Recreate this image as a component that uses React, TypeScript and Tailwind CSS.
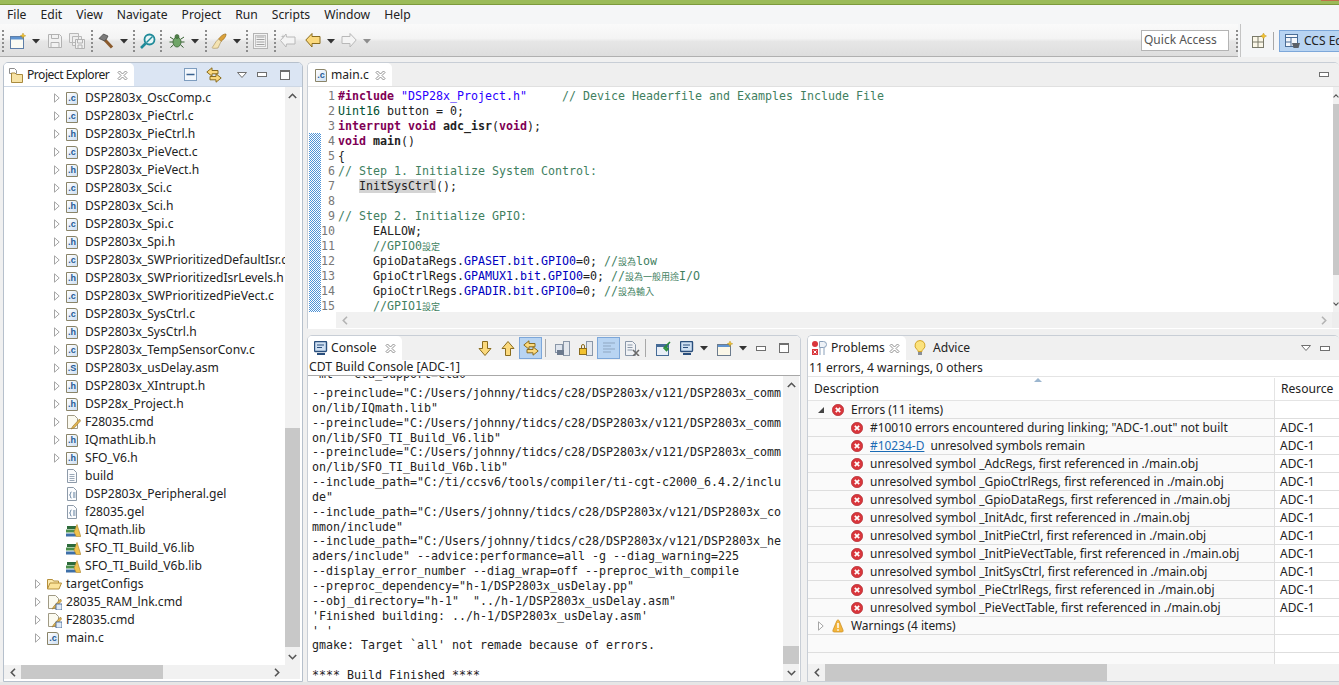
import type { ReactNode } from "react";

const MONO = "font-['DejaVu_Sans_Mono','Liberation_Mono',monospace] text-[11.63px]";

function Caret({ className = "" }: { className?: string }) {
  return (
    <svg width="8" height="5" viewBox="0 0 8 5" className={"shrink-0 " + className}>
      <path d="M0 0h8L4 4.500z" fill="#333" />
    </svg>
  );
}

function Grip({ className = "" }: { className?: string }) {
  return (
    <div className={"flex w-[2px] shrink-0 flex-col gap-[2px] " + className}>
      {[0, 1, 2, 3, 4, 5].map((i) => (
        <div key={i} className="h-[2px] w-[2px] bg-[#8c8c8c]" />
      ))}
    </div>
  );
}

function CloseX({ className = "" }: { className?: string }) {
  return (
    <svg width="11" height="11" viewBox="0 0 11 11" className={"shrink-0 " + className}>
      <path d="M1 2.500 2.500 1 5.500 4 8.500 1 10 2.500 7 5.500 10 8.500 8.500 10 5.500 7 2.500 10 1 8.500 4 5.500z" fill="#fff" stroke="#8e8e8e" />
    </svg>
  );
}

function MinBtn() {
  return <div className="h-[5px] w-[10px] shrink-0 border border-[#6f6f6f] bg-white" />;
}

function MaxBtn() {
  return <div className="h-[10px] w-[10px] shrink-0 border border-[#6f6f6f] border-t-2 bg-white" />;
}

function ViewMenu() {
  return (
    <svg width="10" height="6" viewBox="0 0 10 6" className="shrink-0">
      <path d="M.5.500h9L5 5.500z" fill="#fff" stroke="#6f6f6f" />
    </svg>
  );
}

function ErrorIcon({ className = "" }: { className?: string }) {
  return (
    <svg width="12" height="12" viewBox="0 0 12 12" className={"shrink-0 " + className}>
      <circle cx="6" cy="6" r="5.700" fill="#d9363c" stroke="#a91f25" strokeWidth=".6" />
      <path d="M3.800 3.800l4.400 4.400M8.200 3.800 3.800 8.200" stroke="#fff" strokeWidth="1.700" />
    </svg>
  );
}

function WarnIcon() {
  return (
    <svg width="12" height="14" viewBox="0 0 12 14" className="shrink-0">
      <path d="M6 1c1 0 1.300.8 1.700 2L11 11c.4 1.200 0 2-1 2H2c-1 0-1.400-.8-1-2L4.300 3C4.700 1.800 5 1 6 1z" fill="#f3b63e" stroke="#c98a1b" strokeWidth=".7" />
      <path d="M6 4v5M6 10.300v1.400" stroke="#fff" strokeWidth="1.500" />
    </svg>
  );
}

function TreeArrow({ open = false, className = "" }: { open?: boolean; className?: string }) {
  return open ? (
    <svg width="8" height="8" viewBox="0 0 8 8" className={"shrink-0 " + className}>
      <path d="M7 1v6H1z" fill="#444" />
    </svg>
  ) : (
    <svg width="6" height="10" viewBox="0 0 6 10" className={"shrink-0 " + className}>
      <path d="M.5.800 5.200 5 .5 9.200z" fill="#fff" stroke="#a5a5a5" />
    </svg>
  );
}

function FileIcon({ letter }: { letter: string }) {
  return (
    <div className="flex h-[13px] w-[12px] shrink-0 items-center justify-center rounded-tr-[3px] border border-[#8a8468] bg-[linear-gradient(135deg,#fff,#cfdff2)] font-['Liberation_Sans',sans-serif] text-[9px] leading-none font-bold text-[#1f5a96]">
      {letter}
    </div>
  );
}

function PageLines({ children }: { children?: ReactNode }) {
  return (
    <svg width="12" height="14" viewBox="0 0 12 14" className="shrink-0">
      <path d="M1.500.500h6l3 3v10h-9z" fill="#fbfcfe" stroke="#8d9aa9" />
      {children ?? <path d="M3.500 5.500h5M3.500 7.500h5M3.500 9.500h5M3.500 11.500h5" stroke="#9aa8b8" />}
    </svg>
  );
}

function CmdIcon({ linked = false }: { linked?: boolean }) {
  return (
    <svg width="15" height="15" viewBox="0 0 15 15" className="shrink-0">
      <path d="M1.500.500h7l3 3v10h-10z" fill="#fbfaf0" stroke="#a09a85" />
      <path d="M13.500 4 7 11l-2 3 3.500-1.500L14.500 6z" fill="#e2b652" stroke="#98762a" strokeWidth=".6" />
      {linked && <rect x="9" y="9" width="6" height="6" fill="#dfe9f5" stroke="#34578a" strokeWidth=".8" />}
    </svg>
  );
}

function LibIcon() {
  return (
    <svg width="15" height="13" viewBox="0 0 15 13" className="shrink-0">
      <rect x="0" y="9.500" width="10" height="3" fill="#3d6fa8" />
      <rect x="0" y="5.500" width="10" height="3" fill="#4b8f4b" />
      <rect x="1" y="2" width="9" height="3" fill="#2d6a3a" />
      <path d="M11 .500 14.800 12.500h-4.600L8 8z" fill="#f0c24e" stroke="#a9822a" strokeWidth=".6" />
    </svg>
  );
}

function FolderIcon() {
  return (
    <svg width="15" height="12" viewBox="0 0 15 12" className="shrink-0">
      <path d="M.500 11V1.500h5l1 1.500h5V5" fill="#fbe9ad" stroke="#b58f3a" />
      <path d="M.500 11 3 5h11.500L12 11z" fill="#fbe39a" stroke="#b58f3a" />
    </svg>
  );
}

const B = "#8a6c1e";

function ToolbarIcon({ name }: { name: string }) {
  const common = { width: 16, height: 16, viewBox: "0 0 16 16", className: "shrink-0" };
  switch (name) {
    case "new":
      return (
        <svg {...common}>
          <rect x=".5" y="3.500" width="13" height="12" fill="#fbfbf3" stroke="#5e7fa8" />
          <rect x="1" y="4" width="12" height="2.500" fill="#5f93d0" />
          <path d="M13 0l.8 2 2 .8-2 .8-.8 2-.8-2-2-.8 2-.8z" fill="#f2c230" stroke="#b48a16" strokeWidth=".4" />
        </svg>
      );
    case "save":
      return (
        <svg {...common}>
          <path d="M1.500 1.500h11l2 2v11h-13z" fill="#f2f2f2" stroke="#b2b2b2" />
          <path d="M4.500 1.500v4h7v-4M4 14.500v-5h8v5" fill="none" stroke="#b2b2b2" />
        </svg>
      );
    case "saveall":
      return (
        <svg {...common}>
          <path d="M.5.500h9v9h-9zM3.500 3.500h9v9h-9z" fill="#efefef" stroke="#b8b8b8" />
          <path d="M6.500 6.500h9v9h-9z" fill="#efefef" stroke="#b2b2b2" />
          <path d="M8.500 7v3h5V7M9 15v-3h4v3" fill="none" stroke="#b2b2b2" />
        </svg>
      );
    case "hammer":
      return (
        <svg {...common}>
          <path d="M6.500 6.500 14 14.500" stroke="#8a5a2c" strokeWidth="3.200" />
          <path d="M1 5.500 5.500 1 10 3 8.500 6 6.500 8z" fill="#7b7b7b" stroke="#3e3e3e" strokeWidth=".7" />
        </svg>
      );
    case "search":
      return (
        <svg {...common}>
          <circle cx="9.500" cy="6.500" r="5" fill="#e8f6f7" stroke="#1f8a99" strokeWidth="1.800" />
          <path d="M6.500 9.500l6-6" stroke="#1f8a99" strokeWidth="1.500" />
          <path d="M5.500 10.500 1 15" stroke="#1f8a99" strokeWidth="2.600" />
        </svg>
      );
    case "bug":
      return (
        <svg {...common}>
          <ellipse cx="8" cy="9" rx="4" ry="5" fill="#6fa567" stroke="#35602f" strokeWidth=".8" />
          <circle cx="8" cy="3.500" r="2" fill="#4f7e49" stroke="#35602f" strokeWidth=".6" />
          <path d="M4 6 1 4M4 9H.5M4.300 12 1.500 14.500M12 6l3-2M12 9h3.500M11.700 12l2.800 2.500" stroke="#35602f" />
        </svg>
      );
    case "brush":
      return (
        <svg {...common}>
          <path d="M15 1c.5 2.500-3 6-5 7.500L7.500 6C9 4 12.500.500 15 1z" fill="#dca23a" stroke="#906517" strokeWidth=".6" />
          <path d="M7.500 6 10 8.500l-3 6.500c-3 .5-5.500.5-6-.5C3 13 3.500 9.500 7.500 6z" fill="#f4e3b2" stroke="#a48d58" strokeWidth=".6" />
        </svg>
      );
    case "page":
      return (
        <svg {...common}>
          <rect x=".5" y=".5" width="14" height="15" fill="#f3f3f3" stroke="#b4b4b4" />
          <path d="M3.500 4h8M3.500 6.500h8M3.500 9h8M3.500 11.500h8" stroke="#a0a0a0" />
          <rect x="2.500" y="2.500" width="10" height="11" fill="none" stroke="#c4c4c4" />
        </svg>
      );
    case "lastedit":
      return (
        <svg {...common}>
          <path d="M6.500 4H15v7H6.500L6 14 .5 7.500 6 1z" fill="#f4f4f4" stroke="#b8b8b8" />
          <path d="M3 1l.5 2 2 .5-2 .5L3 6l-.5-2-2-.5 2-.5z" fill="#bcbcbc" />
        </svg>
      );
    case "left":
      return (
        <svg {...common}>
          <path d="M7 3.500h8v7H7v3.500L.8 7 7 .5z" fill="#fbd97d" stroke={B} />
        </svg>
      );
    default:
      return (
        <svg {...common}>
          <path d="M9 3.500H1v7h8v3.500L15.200 7 9 .5z" fill="#f4f4f4" stroke="#b8b8b8" />
        </svg>
      );
  }
}

function LinkIcon() {
  return (
    <svg width="16" height="16" viewBox="0 0 16 16" className="shrink-0">
      <path d="M6 .800.800 5 6 9.200V6.800h6V3.500H6z" fill="#fbd97d" stroke={B} />
      <path d="M10 6.800 15.200 11 10 15.200v-2.400H4V9.500h6z" fill="#fbd97d" stroke={B} />
    </svg>
  );
}

function HeaderTab({ icon, label, width, labelClass = "ml-[4px]" }: { icon: ReactNode; label: string; width: string; labelClass?: string }) {
  return (
    <div className={"flex h-full shrink-0 items-center rounded-tr-[5px] bg-white " + width}>
      {icon}
      <span className={"whitespace-nowrap " + labelClass}>{label}</span>
      <CloseX className="ml-auto mr-[6px]" />
    </div>
  );
}

function VScroll({ thumb, className = "" }: { thumb: string; className?: string }) {
  return (
    <div className={"flex shrink-0 flex-col items-center bg-[#f1f1f1] " + className}>
      <span className="flex h-[17px] w-full items-center justify-center">
        <svg width="9" height="6" viewBox="0 0 9 6">
          <path d="M.8 5 4.500 1.300 8.200 5" fill="none" stroke="#555" strokeWidth="1.600" />
        </svg>
      </span>
      <div className="relative w-full flex-1">
        <div className={"absolute inset-x-0 bg-[#c8c8c8] " + thumb} />
      </div>
      <span className="flex h-[17px] w-full items-center justify-center">
        <svg width="9" height="6" viewBox="0 0 9 6">
          <path d="M.8 1 4.500 4.700 8.200 1" fill="none" stroke="#555" strokeWidth="1.600" />
        </svg>
      </span>
    </div>
  );
}

function HScroll({ thumb, className = "", arrow = "#555", right = true }: { thumb?: string; className?: string; arrow?: string; right?: boolean }) {
  return (
    <div className={"flex shrink-0 items-center bg-[#f1f1f1] " + className}>
      <span className="flex h-full w-[17px] items-center justify-center">
        <svg width="6" height="9" viewBox="0 0 6 9">
          <path d="M5 .8 1.300 4.500 5 8.200" fill="none" stroke={arrow} strokeWidth="1.600" />
        </svg>
      </span>
      <div className="relative h-full flex-1">
        {thumb && <div className={"absolute inset-y-0 bg-[#c8c8c8] " + thumb} />}
      </div>
      {right && (
        <span className="flex h-full w-[17px] items-center justify-center">
          <svg width="6" height="9" viewBox="0 0 6 9">
            <path d="M1 .8 4.700 4.500 1 8.200" fill="none" stroke={arrow} strokeWidth="1.600" />
          </svg>
        </span>
      )}
    </div>
  );
}

type TreeRow = { name: string; icon: ReactNode; arrow?: boolean; top?: boolean };
const C = <FileIcon letter=".c" />;
const H = <FileIcon letter=".h" />;
const S = <FileIcon letter=".S" />;
const GEL = (
  <PageLines>
    <path d="M5.500 5c-1 0-1 .7-1 1.500S4 8 3.500 8c.5 0 1 .5 1 1.500S4.500 11 5.500 11" fill="none" stroke="#5d7c9b" />
    <path d="M7 6h2.500M7 8h2.500M7 10h2.500" stroke="#5d7c9b" />
  </PageLines>
);

const TREE: TreeRow[] = [
  { name: "DSP2803x_OscComp.c", icon: C, arrow: true },
  { name: "DSP2803x_PieCtrl.c", icon: C, arrow: true },
  { name: "DSP2803x_PieCtrl.h", icon: H, arrow: true },
  { name: "DSP2803x_PieVect.c", icon: C, arrow: true },
  { name: "DSP2803x_PieVect.h", icon: H, arrow: true },
  { name: "DSP2803x_Sci.c", icon: C, arrow: true },
  { name: "DSP2803x_Sci.h", icon: H, arrow: true },
  { name: "DSP2803x_Spi.c", icon: C, arrow: true },
  { name: "DSP2803x_Spi.h", icon: H, arrow: true },
  { name: "DSP2803x_SWPrioritizedDefaultIsr.c", icon: C, arrow: true },
  { name: "DSP2803x_SWPrioritizedIsrLevels.h", icon: H, arrow: true },
  { name: "DSP2803x_SWPrioritizedPieVect.c", icon: C, arrow: true },
  { name: "DSP2803x_SysCtrl.c", icon: C, arrow: true },
  { name: "DSP2803x_SysCtrl.h", icon: H, arrow: true },
  { name: "DSP2803x_TempSensorConv.c", icon: C, arrow: true },
  { name: "DSP2803x_usDelay.asm", icon: S, arrow: true },
  { name: "DSP2803x_XIntrupt.h", icon: H, arrow: true },
  { name: "DSP28x_Project.h", icon: H, arrow: true },
  { name: "F28035.cmd", icon: <CmdIcon />, arrow: true },
  { name: "IQmathLib.h", icon: H, arrow: true },
  { name: "SFO_V6.h", icon: H, arrow: true },
  { name: "build", icon: <PageLines /> },
  { name: "DSP2803x_Peripheral.gel", icon: GEL },
  { name: "f28035.gel", icon: GEL },
  { name: "IQmath.lib", icon: <LibIcon /> },
  { name: "SFO_TI_Build_V6.lib", icon: <LibIcon /> },
  { name: "SFO_TI_Build_V6b.lib", icon: <LibIcon /> },
  { name: "targetConfigs", icon: <FolderIcon />, arrow: true, top: true },
  { name: "28035_RAM_lnk.cmd", icon: <CmdIcon linked />, arrow: true, top: true },
  { name: "F28035.cmd", icon: <CmdIcon linked />, arrow: true, top: true },
  { name: "main.c", icon: C, arrow: true, top: true },
];

type Tok = [string, string?];
const K = "text-[#7f0055] font-bold";
const G = "text-[#3f7f5f]";
const F = "text-[#0000c0]";
const CJK = "text-[#3f7f5f] font-['Noto_Sans_CJK_TC',sans-serif] text-[9px]";

const CODE: Tok[][] = [
  [["#include", K], [" "], ['"DSP28x_Project.h"', "text-[#2a00ff]"], ["     "], ["// Device Headerfile and Examples Include File", G]],
  [["Uint16", "text-[#005032]"], [" button = 0;"]],
  [["interrupt", K], [" "], ["void", K], [" "], ["adc_isr", "font-bold"], ["("], ["void", K], [");"]],
  [["void", K], [" "], ["main", "font-bold"], ["()"]],
  [["{"]],
  [["// Step 1. Initialize System Control:", G]],
  [["   "], ["InitSysCtrl", "bg-[#d4d4d4]"], ["();"]],
  [[" "]],
  [["// Step 2. Initialize GPIO:", G]],
  [["     EALLOW;"]],
  [["     "], ["//GPIO0", G], ["設定", CJK]],
  [["     GpioDataRegs."], ["GPASET", F], ["."], ["bit", F], ["."], ["GPIO0", F], ["=0; "], ["//", G], ["設為", CJK], ["low", G]],
  [["     GpioCtrlRegs."], ["GPAMUX1", F], ["."], ["bit", F], ["."], ["GPIO0", F], ["=0; "], ["//", G], ["設為一般用途", CJK], ["I/O", G]],
  [["     GpioCtrlRegs."], ["GPADIR", F], ["."], ["bit", F], ["."], ["GPIO0", F], ["=0; "], ["//", G], ["設為輸入", CJK]],
  [["     "], ["//GPIO1", G], ["設定", CJK]],
];

const CONSOLE = [
  '--preinclude="C:/Users/johnny/tidcs/c28/DSP2803x/v121/DSP2803x_comm',
  'on/lib/IQmath.lib"',
  '--preinclude="C:/Users/johnny/tidcs/c28/DSP2803x/v121/DSP2803x_comm',
  'on/lib/SFO_TI_Build_V6.lib"',
  '--preinclude="C:/Users/johnny/tidcs/c28/DSP2803x/v121/DSP2803x_comm',
  'on/lib/SFO_TI_Build_V6b.lib"',
  '--include_path="C:/ti/ccsv6/tools/compiler/ti-cgt-c2000_6.4.2/inclu',
  'de"',
  '--include_path="C:/Users/johnny/tidcs/c28/DSP2803x/v121/DSP2803x_co',
  'mmon/include"',
  '--include_path="C:/Users/johnny/tidcs/c28/DSP2803x/v121/DSP2803x_he',
  'aders/include" --advice:performance=all -g --diag_warning=225',
  "--display_error_number --diag_wrap=off --preproc_with_compile",
  '--preproc_dependency="h-1/DSP2803x_usDelay.pp"',
  '--obj_directory="h-1"  "../h-1/DSP2803x_usDelay.asm"',
  "'Finished building: ../h-1/DSP2803x_usDelay.asm'",
  "' '",
  "gmake: Target `all' not remade because of errors.",
  " ",
  "**** Build Finished ****",
];

const ERRORS = [
  "unresolved symbol _AdcRegs, first referenced in ./main.obj",
  "unresolved symbol _GpioCtrlRegs, first referenced in ./main.obj",
  "unresolved symbol _GpioDataRegs, first referenced in ./main.obj",
  "unresolved symbol _InitAdc, first referenced in ./main.obj",
  "unresolved symbol _InitPieCtrl, first referenced in ./main.obj",
  "unresolved symbol _InitPieVectTable, first referenced in ./main.obj",
  "unresolved symbol _InitSysCtrl, first referenced in ./main.obj",
  "unresolved symbol _PieCtrlRegs, first referenced in ./main.obj",
  "unresolved symbol _PieVectTable, first referenced in ./main.obj",
];

function ProblemRow({ children, resource = "" }: { children?: ReactNode; resource?: string }) {
  return (
    <div className="flex h-[18px] border-b border-[#dedede]">
      <div className="flex w-[466px] shrink-0 items-center bg-[#fafafa]">{children}</div>
      <div className="flex-1 border-l border-[#dedede] pl-[5px] leading-[17px]">{resource}</div>
    </div>
  );
}

function ConsoleTool({ children, on = false }: { children: ReactNode; on?: boolean }) {
  return (
    <div className={"flex h-[22px] w-[23px] shrink-0 items-center justify-center " + (on ? "border border-[#7da7d9] bg-[#b8d4f2]" : "")}>
      {children}
    </div>
  );
}

function Sep({ className }: { className: string }) {
  return <div className={"h-[18px] w-px shrink-0 bg-[#a8a8a8] " + className} />;
}

export default function App() {
  return (
    <div className="flex h-[685px] w-[1339px] flex-col overflow-hidden bg-[#f0f0f0] font-['Noto_Sans','Open_Sans',sans-serif] text-[12.1px] text-[#222]">
      {/* title bar strip */}
      <div className="flex h-[5px] shrink-0 justify-end border-b border-[#7c9a3c] bg-[#9bbb59]">
        <div className="h-[1px] w-[18px] bg-[#c0704a]" />
      </div>

      {/* menu */}
      <div className="flex h-[19px] shrink-0 items-center gap-[14px] bg-[#f5f6f7] pt-[2px] pl-[7px] text-[12.15px] leading-none">
        {["File", "Edit", "View", "Navigate", "Project", "Run", "Scripts", "Window", "Help"].map((m) => (
          <span key={m}>{m}</span>
        ))}
      </div>

      {/* toolbar */}
      <div className="flex h-[33px] shrink-0 bg-[#f5f6f7]">
        <div className="flex h-[33px] w-[1238px] shrink-0 items-center border-b border-[#b0b0b0] bg-[linear-gradient(#fafafa_0%,#f4f4f4_45%,#e6e6e6_55%,#dedede_100%)] pt-[2px] pl-[2px]">
          <Grip />
          <div className="ml-[6px]"><ToolbarIcon name="new" /></div>
          <Caret className="ml-[6px]" />
          <div className="ml-[7px]"><ToolbarIcon name="save" /></div>
          <div className="ml-[6px]"><ToolbarIcon name="saveall" /></div>
          <Grip className="ml-[6px]" />
          <div className="ml-[5px]"><ToolbarIcon name="hammer" /></div>
          <Caret className="ml-[6px]" />
          <Grip className="ml-[5px]" />
          <div className="ml-[5px]"><ToolbarIcon name="search" /></div>
          <Grip className="ml-[4px]" />
          <div className="ml-[7px]"><ToolbarIcon name="bug" /></div>
          <Caret className="ml-[6px]" />
          <Grip className="ml-[6px]" />
          <div className="ml-[4px]"><ToolbarIcon name="brush" /></div>
          <Caret className="ml-[6px]" />
          <Grip className="ml-[5px]" />
          <div className="ml-[5px]"><ToolbarIcon name="page" /></div>
          <Grip className="ml-[5px]" />
          <div className="ml-[4px]"><ToolbarIcon name="lastedit" /></div>
          <div className="ml-[9px]"><ToolbarIcon name="left" /></div>
          <Caret className="ml-[6px]" />
          <div className="ml-[6px]"><ToolbarIcon name="right" /></div>
          <Caret className="ml-[6px] opacity-50" />
          <div className="ml-auto -mt-[2px] flex h-[21px] w-[88px] items-center border border-[#b4b4b4] bg-white pl-[2px] text-[12px] text-[#555]">
            Quick Access
          </div>
          <Grip className="ml-[7px]" />
        </div>
        <div className="flex flex-1 items-center">
          <div className="ml-[2px] h-full w-px bg-[#c4c4c4]" />
          <svg width="15" height="15" viewBox="0 0 15 15" className="ml-[11px] shrink-0">
            <rect x=".5" y="3.500" width="11" height="11" fill="#fbf7e8" stroke="#7a7a6a" />
            <path d="M.5 9h11M6 3.500v11" stroke="#7a7a6a" />
            <path d="M11.500 0l1 2 2 1-2 1-1 2-1-2-2-1 2-1z" fill="#f2c230" stroke="#b48a16" strokeWidth=".4" />
          </svg>
          <div className="ml-[6px] h-[18px] w-px bg-[#a8a8a8]" />
          <div className="ml-[5px] flex h-[22px] min-w-0 flex-1 items-center overflow-hidden border border-[#7da7d9] bg-[#b8d4f2] pl-[5px] text-[12px] whitespace-nowrap">
            <svg width="15" height="14" viewBox="0 0 15 14" className="shrink-0">
              <rect x=".5" y=".5" width="12" height="12" fill="#f4f7fb" stroke="#4a6d96" />
              <path d="M.5 3.500h12M6 3.500v9M.5 8h5.500" stroke="#4a6d96" />
              <path d="M7 9h8l-1.500 5h-5z" fill="#5a6068" />
            </svg>
            <span className="ml-[4px]">CCS Edit</span>
          </div>
        </div>
      </div>

      {/* workbench */}
      <div className="mt-[5px] flex min-h-0 flex-1 border-b-[3px] border-[#e6e6e6] pl-[3px]">
        {/* project explorer */}
        <div className="flex w-[300px] shrink-0 flex-col overflow-hidden rounded-t-[5px] border border-[#b6c0cc] bg-white">
          <div className="flex h-[24px] shrink-0 items-center border-b border-[#cdd7e4] bg-[#dbe5f3]">
            <HeaderTab
              width="w-[130px] pt-[2px] pl-[4px]"
              label="Project Explorer"
              labelClass="ml-[3px] tracking-[-0.5px]"
              icon={
                <svg width="16" height="15" viewBox="0 0 16 15" className="shrink-0">
                  <path d="M1.500.500h5l2 2v3h-7z" fill="#fff" stroke="#8d8d8d" />
                  <path d="M3.500 5V14.500h11v-8h-6l-1.500-1.500z" fill="#f7e3a6" stroke="#a98a3d" />
                </svg>
              }
            />
            <div className="ml-[50px] flex items-center">
              <svg width="13" height="13" viewBox="0 0 13 13" className="shrink-0">
                <rect x=".5" y=".5" width="12" height="12" fill="#f3f7fc" stroke="#7e9dbf" />
                <path d="M2.500 6.500h8" stroke="#38618f" strokeWidth="1.400" />
              </svg>
              <div className="ml-[9px]"><LinkIcon /></div>
              <div className="ml-[15px]"><ViewMenu /></div>
              <div className="ml-[10px]"><MinBtn /></div>
              <div className="ml-[13px]"><MaxBtn /></div>
            </div>
          </div>
          <div className="flex min-h-0 flex-1">
            <div className="min-w-0 flex-1 overflow-hidden pt-[2px]">
              {TREE.map((r, i) => (
                <div key={i} className={"flex h-[18px] items-center whitespace-nowrap " + (r.top ? "pl-[31px]" : "pl-[50px]")}>
                  <div className="flex w-[12px] shrink-0 items-center">{r.arrow && <TreeArrow />}</div>
                  <div className="flex w-[18px] shrink-0 items-center">{r.icon}</div>
                  <span className="ml-[1px]">{r.name}</span>
                </div>
              ))}
            </div>
            <VScroll thumb="top-[324px] bottom-[1px]" className="mr-[2px] w-[15px]" />
          </div>
          <div className="mb-[2px] mr-[2px] shrink-0 bg-[#f1f1f1] pr-[15px]">
            <HScroll thumb="left-0 w-[142px]" className="h-[14px]" />
          </div>
        </div>

        <div className="ml-[4px] flex min-w-0 flex-1 flex-col">
          {/* editor */}
          <div className="flex h-[267px] shrink-0 flex-col overflow-hidden rounded-t-[5px] border-t border-l border-b border-t-[#c8ced6] border-l-[#c8ced6] border-b-white bg-white">
            <div className="flex h-[24px] shrink-0 items-center border-b border-[#e0e0e0] bg-[#efefef]">
              <HeaderTab width="w-[84px] pt-[2px] pl-[7px]" label="main.c" icon={<FileIcon letter=".c" />} />
              <div className="ml-auto mr-[10px]"><MinBtn /></div>
            </div>
            <div className="flex min-h-0 flex-1">
              <div className="flex w-[13px] shrink-0 flex-col pl-[1px]">
                <div className="h-[46px] shrink-0" />
                <svg width="12" height="179" className="shrink-0">
                  <defs>
                    <pattern id="quickdiff" width="2" height="2" patternUnits="userSpaceOnUse">
                      <rect width="2" height="2" fill="#ffffff" />
                      <rect width="1" height="1" fill="#4f93d6" />
                      <rect x="1" y="1" width="1" height="1" fill="#4f93d6" />
                    </pattern>
                  </defs>
                  <rect width="12" height="179" fill="url(#quickdiff)" shapeRendering="crispEdges" />
                </svg>
              </div>
              <div className={"min-w-0 flex-1 overflow-hidden pt-[2px] " + MONO}>
                {CODE.map((line, i) => (
                  <div key={i} className="flex h-[15px] leading-[15px] whitespace-pre">
                    <span className="w-[14px] shrink-0 text-right text-[#787878]">{i + 1}</span>
                    <span className="pl-[3px]">
                      {line.map((t, j) => (
                        <span key={j} className={t[1]}>{t[0]}</span>
                      ))}
                    </span>
                  </div>
                ))}
              </div>
              <VScroll thumb="top-0 bottom-[20px]" className="w-[6px]" />
            </div>
            <div className="shrink-0 pl-[28px]">
              <div className="bg-[#ededed] pr-[7px]">
                <HScroll arrow="#b4b4b4" className="h-[16px] bg-[#ededed]" />
              </div>
            </div>
          </div>

          <div className="mt-[6px] flex min-h-0 flex-1">
            {/* console */}
            <div className="flex w-[494px] shrink-0 flex-col overflow-hidden rounded-t-[5px] border border-[#c8ced6] bg-white">
              <div className="flex h-[24px] shrink-0 items-center bg-[#f0f0f0]">
                <HeaderTab
                  width="w-[94px] pl-[6px]"
                  label="Console"
                  labelClass="ml-[3px]"
                  icon={
                    <svg width="14" height="14" viewBox="0 0 14 14" className="shrink-0">
                      <rect x=".5" y=".5" width="12" height="10" rx="1" fill="#cfe0f3" stroke="#2a4f7d" strokeWidth="1.400" />
                      <path d="M3 4h7M3 6.500h5" stroke="#2a4f7d" />
                      <path d="M3 13h8" stroke="#2a4f7d" strokeWidth="2" />
                    </svg>
                  }
                />
                <div className="ml-[71px] flex items-center">
                  <ConsoleTool><svg width="14" height="15" viewBox="0 0 14 15"><path d="M4.500.500h5v7H13L7 14.500 1 7.500h3.500z" fill="#fbd97d" stroke={B} /></svg></ConsoleTool>
                  <ConsoleTool><svg width="14" height="15" viewBox="0 0 14 15"><path d="M4.500 14.500h5v-7H13L7 .5 1 7.500h3.500z" fill="#fbd97d" stroke={B} /></svg></ConsoleTool>
                  <ConsoleTool on><LinkIcon /></ConsoleTool>
                  <Sep className="ml-[3px] mr-[5px]" />
                  <ConsoleTool><svg width="15" height="15" viewBox="0 0 15 15"><rect x="8.500" y=".5" width="6" height="14" fill="#e4e8ee" stroke="#8a97a8" /><rect x=".5" y="3.500" width="7" height="8" fill="#dfe5ee" stroke="#8a97a8" /><rect x="2" y="9" width="7" height="5" fill="#6c7a8e" /></svg></ConsoleTool>
                  <ConsoleTool><svg width="15" height="15" viewBox="0 0 15 15"><rect x="8.500" y=".5" width="6" height="14" fill="#e4e8ee" stroke="#8a97a8" /><rect x="1.500" y="7.500" width="7" height="6" fill="#f2c230" stroke="#8a6c1e" /><path d="M3.500 7.500V5a1.500 1.500 0 0 1 3 0v2.500" fill="none" stroke="#8a6c1e" /></svg></ConsoleTool>
                  <ConsoleTool on><svg width="14" height="12" viewBox="0 0 14 12"><path d="M1 1h12M1 4h8M1 7h12M1 10h8" stroke="#8fa7c2" /></svg></ConsoleTool>
                  <ConsoleTool><svg width="16" height="15" viewBox="0 0 16 15"><path d="M1.500.500h7l3 3v11h-10z" fill="#f0f2f5" stroke="#8a97a8" /><path d="M3.500 4h5M3.500 6.500h5M3.500 9h5" stroke="#8a97a8" /><path d="M9 9l6 6M15 9l-6 6" stroke="#6b6b6b" strokeWidth="1.600" /></svg></ConsoleTool>
                  <Sep className="ml-[2px] mr-[6px]" />
                  <ConsoleTool><svg width="16" height="15" viewBox="0 0 16 15"><rect x=".5" y="3.500" width="12" height="11" fill="#e9eff7" stroke="#456b97" /><path d="M1 5h11" stroke="#456b97" strokeWidth="2" /><path d="M14 1 9.500 5.500M8 7l1.500-1.500L12 8l-1.500 1.500z" stroke="#2b8a3c" strokeWidth="1.600" fill="#45b154" /></svg></ConsoleTool>
                  <ConsoleTool><svg width="14" height="14" viewBox="0 0 14 14"><rect x=".5" y=".5" width="12" height="10" rx="1" fill="#cfe0f3" stroke="#2a4f7d" strokeWidth="1.400" /><path d="M3 4h7M3 6.500h5" stroke="#2a4f7d" /><path d="M3 13h8" stroke="#2a4f7d" strokeWidth="2" /></svg></ConsoleTool>
                  <Caret className="ml-[2px]" />
                  <div className="ml-[5px]">
                    <ConsoleTool><svg width="16" height="15" viewBox="0 0 16 15"><rect x=".5" y="3.500" width="13" height="11" fill="#fbf7e8" stroke="#6c7c8e" /><path d="M1 5h12" stroke="#5f93d0" strokeWidth="2" /><path d="M13 0l.8 2 2 .8-2 .8-.8 2-.8-2-2-.8 2-.8z" fill="#f2c230" stroke="#b48a16" strokeWidth=".4" /></svg></ConsoleTool>
                  </div>
                  <Caret className="ml-[3px]" />
                  <div className="ml-[9px]"><MinBtn /></div>
                  <div className="ml-[13px]"><MaxBtn /></div>
                </div>
              </div>
              <div className="flex h-[16px] shrink-0 items-center border-b border-[#a8a8a8] pl-[1px] text-[12.2px] leading-none whitespace-nowrap">
                CDT Build Console [ADC-1]
              </div>
              <div className="flex min-h-0 flex-1">
                <div className={"min-w-0 flex-1 overflow-hidden pl-[4px] leading-[14.85px] whitespace-pre " + MONO}>
                  <div className="h-[10px] overflow-hidden">
                    <div className="-mt-[9px]">-mt --cla_support=cla0</div>
                  </div>
                  {CONSOLE.map((l, i) => (
                    <div key={i}>{l}</div>
                  ))}
                </div>
                <VScroll thumb="bottom-0 h-[18px]" className="mr-[1px] w-[16px]" />
              </div>
            </div>

            {/* problems */}
            <div className="ml-[6px] flex min-w-0 flex-1 flex-col overflow-hidden rounded-t-[5px] border-t border-l border-b border-[#c8ced6] bg-white">
              <div className="flex h-[24px] shrink-0 items-center bg-[#f0f0f0]">
                <HeaderTab
                  width="w-[98px] pl-[3px]"
                  label="Problems"
                  icon={
                    <svg width="16" height="16" viewBox="0 0 16 16" className="shrink-0">
                      <rect x="1" y="1" width="6" height="6" fill="#d9363c" rx="3" />
                      <rect x="1" y="9" width="6" height="6" fill="#d9363c" />
                      <path d="M2.500 10.500l3 3M5.500 10.500l-3 3" stroke="#fff" />
                      <path d="M8.500 1.500h4a2.500 2.500 0 0 1 0 6h-4zM9 7.500V15M13 7.500V15" fill="#eef2f7" stroke="#8aa0ba" />
                    </svg>
                  }
                />
                <div className="ml-[8px] flex items-center">
                  <svg width="12" height="16" viewBox="0 0 12 16" className="shrink-0">
                    <path d="M6 .5a5 5 0 0 1 3 9c-.6.5-1 1-1 2H4c0-1-.4-1.500-1-2a5 5 0 0 1 3-9z" fill="#fbe27d" stroke="#d2a52c" />
                    <rect x="4" y="12" width="4" height="3" fill="#8a8f96" />
                  </svg>
                  <span className="ml-[7px]">Advice</span>
                </div>
                <div className="ml-auto mr-[9px] flex items-center">
                  <ViewMenu />
                  <div className="ml-[9px]"><MinBtn /></div>
                </div>
              </div>
              <div className="flex h-[16px] shrink-0 items-center pl-[1px] leading-none">11 errors, 4 warnings, 0 others</div>
              <div className="flex h-[25px] shrink-0 border-y border-[#e4e4e4] bg-white pt-[1px]">
                <div className="relative flex w-[466px] shrink-0 items-center pl-[6px]">
                  Description
                  <svg width="8" height="4" viewBox="0 0 8 4" className="absolute top-[0px] left-[226px]">
                    <path d="M0 4 4 0l4 4z" fill="#9cb6cf" />
                  </svg>
                </div>
                <div className="flex flex-1 items-center border-l border-[#e4e4e4] pl-[6px]">Resource</div>
              </div>
              <div className="min-h-0 flex-1 overflow-hidden text-[11.95px]">
                <ProblemRow>
                  <TreeArrow open className="ml-[9px]" />
                  <ErrorIcon className="ml-[7px]" />
                  <span className="ml-[7px]">Errors (11 items)</span>
                </ProblemRow>
                <ProblemRow resource="ADC-1">
                  <ErrorIcon className="ml-[43px]" />
                  <span className="ml-[7px] whitespace-nowrap">#10010 errors encountered during linking; "ADC-1.out" not built</span>
                </ProblemRow>
                <ProblemRow resource="ADC-1">
                  <ErrorIcon className="ml-[43px]" />
                  <span className="ml-[7px] text-[#1a6bb5] underline">#10234-D</span>
                  <span className="ml-[6px]">unresolved symbols remain</span>
                </ProblemRow>
                {ERRORS.map((e) => (
                  <ProblemRow key={e} resource="ADC-1">
                    <ErrorIcon className="ml-[43px]" />
                    <span className="ml-[7px] whitespace-nowrap">{e}</span>
                  </ProblemRow>
                ))}
                <ProblemRow>
                  <TreeArrow className="ml-[10px]" />
                  <div className="ml-[8px]"><WarnIcon /></div>
                  <span className="ml-[7px]">Warnings (4 items)</span>
                </ProblemRow>
                <ProblemRow />
                <ProblemRow />
              </div>
              <HScroll thumb="left-0 w-[282px]" right={false} className="h-[17px] bg-[#ededed]" />
            </div>
          </div>
        </div>
      </div>
    </div>
  );
}
